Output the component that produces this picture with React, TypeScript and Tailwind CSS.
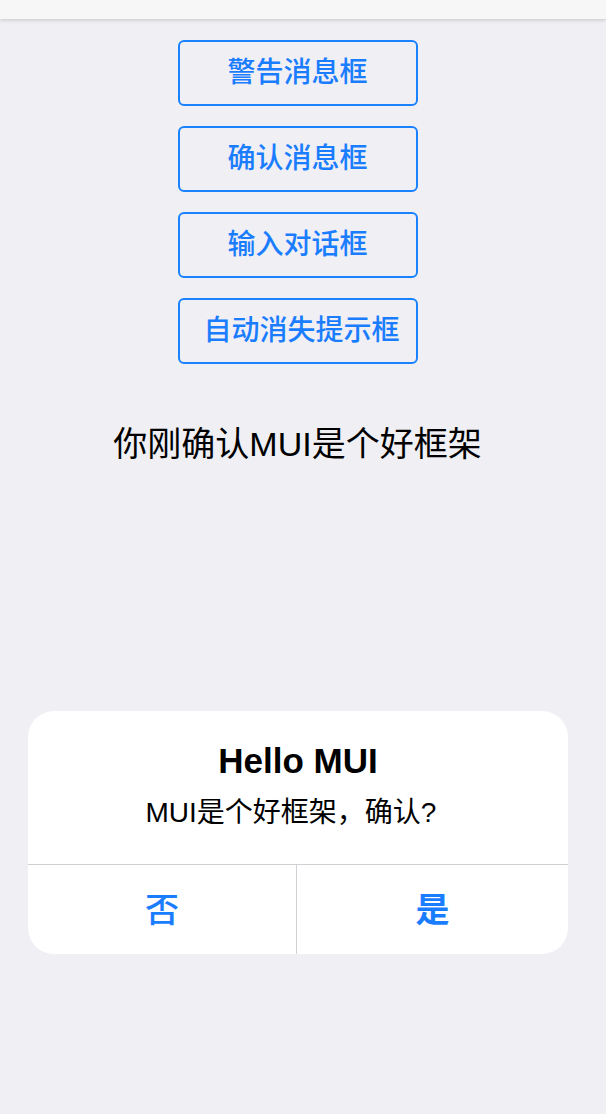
import React from "react";

const FONT = '"Liberation Sans", "Noto Sans CJK SC", sans-serif';

const actions = ["警告消息框", "确认消息框", "输入对话框", "自动消失提示框"];

export default function App() {
  return (
    <div
      className="relative w-full min-h-[1114px] bg-[#efeff4] text-black overflow-hidden"
      style={{ fontFamily: FONT }}
    >
      {/* top bar */}
      <div className="h-[19px] bg-[#f7f7f7] shadow-[0_1px_4px_rgba(0,0,0,0.18)]" />

      <div className="w-[595px]">
        <div className="flex flex-col items-center pt-[21px] gap-[20px]">
          {actions.map((label) => (
            <button
              key={label}
              className="block w-[240px] h-[66px] border-2 border-[#1a82ff] rounded-[6px] px-[24px] text-center whitespace-nowrap text-[28px] leading-[62px] font-medium text-[#1a7dff]"
            >
              {label}
            </button>
          ))}
        </div>

        <div className="mt-[58px] text-center text-[34px] leading-[44px]">
          你刚确认MUI是个好框架
        </div>
      </div>

      {/* confirm popup */}
      <div className="absolute left-[28px] top-[711px] w-[540px] bg-white rounded-[26px] overflow-hidden">
        <div className="px-[30px] pt-[30px] pb-[29px] text-center border-b border-[#d0d0d4]">
          <div className="text-[35px] leading-[40px] font-bold">Hello MUI</div>
          <div className="mt-[10px] pr-[14px] text-[28px] leading-[44px]">MUI是个好框架，确认?</div>
        </div>
        <div className="flex h-[89px]">
          <button className="w-[269px] text-[34px] leading-[88px] font-medium text-[#1a7dff] border-r border-[#d0d0d4]">
            否
          </button>
          <button className="flex-1 text-[34px] leading-[88px] font-bold text-[#1a7dff]">
            是
          </button>
        </div>
      </div>
    </div>
  );
}
